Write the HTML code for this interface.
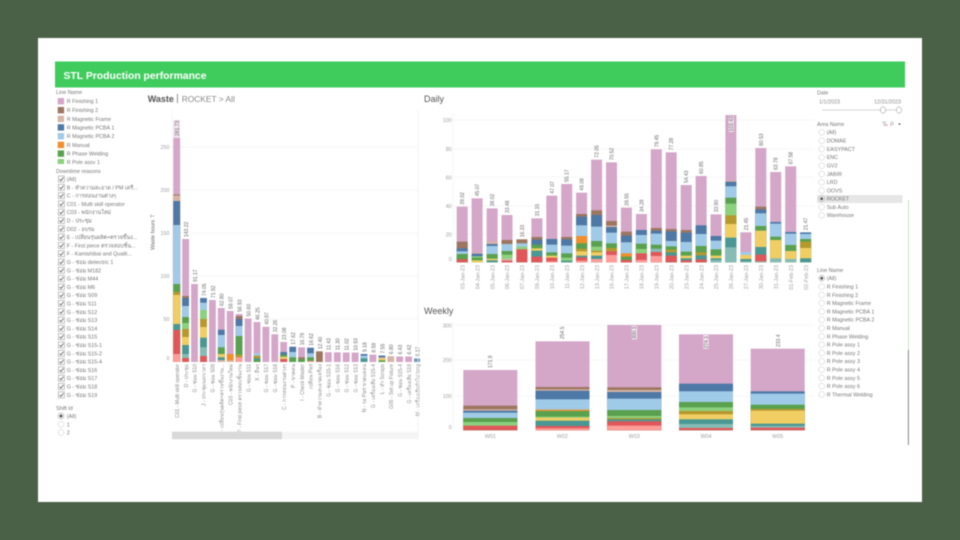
<!DOCTYPE html>
<html><head><meta charset="utf-8"><title>STL Production performance</title>
<style>
html,body{margin:0;padding:0;background:#4b6147;width:960px;height:540px;overflow:hidden}
svg{display:block;filter:blur(.4px)}
text{font-family:"Liberation Sans","Noto Sans CJK SC",sans-serif;fill:#777;font-size:5.4px}
.p{fill:#d4a6c8}.b{fill:#9d7660}.e{fill:#d7b5a6}.u{fill:#4e79a7}.l{fill:#a0cbe8}.o{fill:#f28e2b}.g{fill:#59a14f}.n{fill:#8cd17d}.v{fill:#b6992d}.y{fill:#f1ce63}.t{fill:#499894}.s{fill:#86bcb6}.r{fill:#e15759}.m{fill:#ff9d9a}.k{fill:#eed9e8}
.w rect{width:6.8px;height:170px}
.d rect{width:11px;height:300px}
.z rect{width:54px;height:250px}
.v5 text{font-size:5px;fill:#666}
.ax text{font-size:5.4px;fill:#a0a0a0;text-anchor:end}
.dt text{font-size:5.4px;fill:#a0a0a0;text-anchor:end}
.gl line{stroke:#f3f3f3;stroke-width:.7}
.ct text{font-size:5px;fill:#888;text-anchor:end}
</style></head><body>
<svg width="960" height="540" viewBox="0 0 960 540" xmlns="http://www.w3.org/2000/svg">
<defs>
<clipPath id="cw"><rect x="170" y="100" width="250" height="262"/></clipPath>
<clipPath id="cd"><rect x="450" y="115" width="370" height="147.4"/></clipPath>
<clipPath id="cz"><rect x="450" y="325" width="370" height="105.2"/></clipPath>
<clipPath id="cl"><rect x="50" y="90" width="90" height="74"/></clipPath>
<symbol id="c" viewBox="0 0 7 7" overflow="visible"><rect x=".4" y=".4" width="6" height="6" fill="#fff" stroke="#999" stroke-width=".6"/><path d="M1.6 3.6 L3 5 L5.4 1.8" fill="none" stroke="#555" stroke-width=".8"/></symbol>
<symbol id="o" viewBox="0 0 7 7" overflow="visible"><circle cx="3.5" cy="3.5" r="2.9" fill="#fff" stroke="#c4c4c4" stroke-width=".5"/></symbol>
<symbol id="q" viewBox="0 0 7 7" overflow="visible"><circle cx="3.5" cy="3.5" r="2.9" fill="#fff" stroke="#888" stroke-width=".5"/><circle cx="3.5" cy="3.5" r="1.5" fill="#555"/></symbol>
</defs>
<rect x="38" y="38" width="884" height="464" fill="#fff"/>
<rect x="55" y="61.5" width="850" height="26" fill="#3fcc5d"/>
<text x="63.5" y="79" textLength="143" lengthAdjust="spacingAndGlyphs" style="font-size:10.5px;font-weight:700;fill:#fff">STL Production performance</text>

<!-- right edge line -->
<rect x="908" y="200" width=".8" height="150" fill="#bcd9bb"/>
<rect x="908" y="350" width=".8" height="95" fill="#6b6b6b"/>

<!-- left legend -->
<text x="56" y="94">Line Name</text>
<g clip-path="url(#cl)">
<rect class="p" x="57.7" y="98" width="6.4" height="6.4"/><text x="66.7" y="103.2">R Finishing 1</text>
<rect class="b" x="57.7" y="107" width="6.4" height="6.4"/><text x="66.7" y="112">R Finishing 2</text>
<rect class="e" x="57.7" y="115.7" width="6.4" height="6.4"/><text x="66.7" y="120.8">R Magnetic Frame</text>
<rect class="u" x="57.7" y="124.2" width="6.4" height="6.4"/><text x="66.7" y="129.3">R Magnetic PCBA 1</text>
<rect class="l" x="57.7" y="133" width="6.4" height="6.4"/><text x="66.7" y="138.1">R Magnetic PCBA 2</text>
<rect class="o" x="57.7" y="141.7" width="6.4" height="6.4"/><text x="66.7" y="146.8">R Manual</text>
<rect class="g" x="57.7" y="150.4" width="6.4" height="6.4"/><text x="66.7" y="155.5">R Phase Welding</text>
<rect class="n" x="57.7" y="159" width="6.4" height="6.4"/><text x="66.7" y="164.1">R Pole assy 1</text>
</g>
<text x="56" y="173">Downtime reasons</text>
<g>
<use href="#c" x="58" y="175.6" width="7" height="7"/><text x="66.7" y="181">(All)</text>
<use href="#c" x="58" y="183.9" width="7" height="7"/><text x="66.7" y="189.3">B - ทำความสะอาด / PM เครื่...</text>
<use href="#c" x="58" y="192.2" width="7" height="7"/><text x="66.7" y="197.6">C - การสอนงานต่างๆ</text>
<use href="#c" x="58" y="200.5" width="7" height="7"/><text x="66.7" y="205.9">C01 - Multi skill operator</text>
<use href="#c" x="58" y="208.8" width="7" height="7"/><text x="66.7" y="214.2">C03 - พนักงานใหม่</text>
<use href="#c" x="58" y="217.1" width="7" height="7"/><text x="66.7" y="222.5">D - ประชุม</text>
<use href="#c" x="58" y="225.4" width="7" height="7"/><text x="66.7" y="230.8">D02 - อบรม</text>
<use href="#c" x="58" y="233.7" width="7" height="7"/><text x="66.7" y="239.1">E - เปลี่ยนรุ่นผลิต+ตรวจขึ้นง...</text>
<use href="#c" x="58" y="242" width="7" height="7"/><text x="66.7" y="247.4">F - First piece ตรวจสอบชิ้น...</text>
<use href="#c" x="58" y="250.3" width="7" height="7"/><text x="66.7" y="255.7">F - Kamishibai and Qualit...</text>
<use href="#c" x="58" y="258.6" width="7" height="7"/><text x="66.7" y="264">G - ซ่อม dielectric 1</text>
<use href="#c" x="58" y="266.9" width="7" height="7"/><text x="66.7" y="272.3">G - ซ่อม M182</text>
<use href="#c" x="58" y="275.2" width="7" height="7"/><text x="66.7" y="280.6">G - ซ่อม M44</text>
<use href="#c" x="58" y="283.5" width="7" height="7"/><text x="66.7" y="288.9">G - ซ่อม M6</text>
<use href="#c" x="58" y="291.8" width="7" height="7"/><text x="66.7" y="297.2">G - ซ่อม S09</text>
<use href="#c" x="58" y="300.1" width="7" height="7"/><text x="66.7" y="305.5">G - ซ่อม S11</text>
<use href="#c" x="58" y="308.4" width="7" height="7"/><text x="66.7" y="313.8">G - ซ่อม S12</text>
<use href="#c" x="58" y="316.7" width="7" height="7"/><text x="66.7" y="322.1">G - ซ่อม S13</text>
<use href="#c" x="58" y="325" width="7" height="7"/><text x="66.7" y="330.4">G - ซ่อม S14</text>
<use href="#c" x="58" y="333.3" width="7" height="7"/><text x="66.7" y="338.7">G - ซ่อม S15</text>
<use href="#c" x="58" y="341.6" width="7" height="7"/><text x="66.7" y="347">G - ซ่อม S15-1</text>
<use href="#c" x="58" y="349.9" width="7" height="7"/><text x="66.7" y="355.3">G - ซ่อม S15-2</text>
<use href="#c" x="58" y="358.2" width="7" height="7"/><text x="66.7" y="363.6">G - ซ่อม S15-4</text>
<use href="#c" x="58" y="366.5" width="7" height="7"/><text x="66.7" y="371.9">G - ซ่อม S16</text>
<use href="#c" x="58" y="374.8" width="7" height="7"/><text x="66.7" y="380.2">G - ซ่อม S17</text>
<use href="#c" x="58" y="383.1" width="7" height="7"/><text x="66.7" y="388.5">G - ซ่อม S18</text>
<use href="#c" x="58" y="391.4" width="7" height="7"/><text x="66.7" y="396.8">G - ซ่อม S19</text>
</g>
<text x="56" y="409.8">Shift Id</text>
<use href="#q" x="57.5" y="412.5" width="7" height="7"/><text x="66.7" y="418">(All)</text>
<use href="#o" x="57.5" y="420.8" width="7" height="7"/><text x="66.7" y="426.3">1</text>
<use href="#o" x="57.5" y="429.1" width="7" height="7"/><text x="66.7" y="434.6">2</text>

<!-- titles -->
<text x="147.7" y="102" style="font-size:9px;font-weight:700;fill:#555">Waste</text>
<rect x="177" y="94" width=".8" height="9" fill="#777"/>
<text x="181.7" y="102" style="font-size:8.4px;fill:#888">ROCKET &gt; All</text>
<text x="424" y="102" style="font-size:9px;fill:#555">Daily</text>
<text x="424" y="314" style="font-size:9px;fill:#555">Weekly</text>

<!-- Waste chart -->
<g class="gl"><line x1="172" x2="418" y1="147" y2="147"/><line x1="172" x2="418" y1="190" y2="190"/><line x1="172" x2="418" y1="233" y2="233"/><line x1="172" x2="418" y1="276" y2="276"/><line x1="172" x2="418" y1="319" y2="319"/><line x1="172" x2="172" y1="110" y2="362"/></g>
<g class="ax"><text x="169.5" y="149">250</text><text x="169.5" y="192">200</text><text x="169.5" y="235">150</text><text x="169.5" y="278">100</text><text x="169.5" y="321">50</text><text x="169.5" y="360">0</text></g>
<text transform="translate(154.5 250) rotate(-90)" style="font-size:5.4px;fill:#666">Waste hours ⊤</text>
<g class="w" clip-path="url(#cw)">
<g transform="translate(173.3 0)"><rect class="k" y="120"/><rect class="p" y="138"/><rect class="b" y="194.5"/><rect class="e" y="195.5"/><rect class="u" y="201"/><rect class="l" y="225"/><rect class="g" y="284"/><rect class="v" y="292"/><rect class="y" y="295"/><rect class="t" y="324"/><rect class="r" y="330"/><rect class="m" y="354"/></g>
<g transform="translate(182.2 0)"><rect class="p" y="239"/><rect class="b" y="296"/><rect class="u" y="298"/><rect class="l" y="306"/><rect class="g" y="317"/><rect class="n" y="323"/><rect class="v" y="329"/><rect class="y" y="337"/><rect class="t" y="345"/><rect class="s" y="354"/><rect class="r" y="358"/></g>
<g transform="translate(191.1 0)"><rect class="p" y="284"/></g>
<g transform="translate(200.1 0)"><rect class="u" y="298"/><rect class="l" y="302.7"/><rect class="n" y="310"/><rect class="v" y="319"/><rect class="y" y="327"/><rect class="t" y="337.7"/><rect class="s" y="347.3"/><rect class="r" y="356"/></g>
<g transform="translate(209 0)"><rect class="p" y="300"/></g>
<g transform="translate(217.9 0)"><rect class="p" y="308"/><rect class="u" y="329.7"/><rect class="l" y="335"/><rect class="g" y="347.3"/><rect class="y" y="354"/><rect class="t" y="357.3"/><rect class="e" y="360"/></g>
<g transform="translate(226.8 0)"><rect class="p" y="311"/><rect class="o" y="354"/><rect class="e" y="360.3"/></g>
<g transform="translate(235.7 0)"><rect class="p" y="314"/><rect class="b" y="316"/><rect class="u" y="319"/><rect class="l" y="326"/><rect class="g" y="336"/><rect class="v" y="354.7"/><rect class="m" y="357.3"/></g>
<g transform="translate(244.7 0)"><rect class="p" y="318.5"/></g>
<g transform="translate(253.6 0)"><rect class="p" y="322"/><rect class="l" y="353.3"/><rect class="v" y="355.7"/><rect class="t" y="358.3"/><rect class="g" y="360"/></g>
<g transform="translate(262.5 0)"><rect class="p" y="326.8"/></g>
<g transform="translate(271.4 0)"><rect class="p" y="334.3"/></g>
<g transform="translate(280.3 0)"><rect class="p" y="342"/><rect class="u" y="352"/><rect class="g" y="354.7"/><rect class="y" y="356.7"/><rect class="r" y="359"/></g>
<g transform="translate(289.3 0)"><rect class="u" y="346.7"/><rect class="l" y="352"/><rect class="g" y="357.3"/></g>
<g transform="translate(298.2 0)"><rect class="p" y="347.3"/><rect class="b" y="357.3"/><rect class="g" y="359"/></g>
<g transform="translate(307.1 0)"><rect class="u" y="347.7"/><rect class="l" y="353.3"/><rect class="g" y="357.3"/><rect class="m" y="361"/></g>
<g transform="translate(316 0)"><rect class="b" y="351.3"/></g>
<g transform="translate(324.9 0)"><rect class="p" y="352.2"/></g>
<g transform="translate(333.9 0)"><rect class="p" y="352.3"/></g>
<g transform="translate(342.8 0)"><rect class="p" y="352.5"/></g>
<g transform="translate(351.7 0)"><rect class="p" y="352.6"/></g>
<g transform="translate(360.6 0)"><rect class="u" y="354"/><rect class="l" y="355.7"/><rect class="t" y="358.3"/></g>
<g transform="translate(369.5 0)"><rect class="p" y="354.6"/></g>
<g transform="translate(378.5 0)"><rect class="u" y="355.5"/><rect class="e" y="357.3"/><rect class="y" y="358.5"/><rect class="g" y="360.3"/></g>
<g transform="translate(387.4 0)"><rect class="e" y="356.2"/></g>
<g transform="translate(396.3 0)"><rect class="p" y="356.5"/></g>
<g transform="translate(405.2 0)"><rect class="p" y="356.5"/></g>
<g transform="translate(414.1 0)" style="opacity:.8"><rect class="u" y="358.4"/></g>
</g>
<g class="v5">
<rect x="175" y="121" width="5" height="16" fill="#f3e6ef"/>
<text transform="translate(179 136) rotate(-90)">281.73</text>
<text transform="translate(188 237) rotate(-90)">143.22</text>
<text transform="translate(197 282) rotate(-90)">91.17</text>
<text transform="translate(206 296) rotate(-90)">74.05</text>
<text transform="translate(214.8 298) rotate(-90)">71.92</text>
<text transform="translate(223.7 306) rotate(-90)">62.80</text>
<text transform="translate(232.6 309) rotate(-90)">59.07</text>
<text transform="translate(241.5 312) rotate(-90)">56.93</text>
<text transform="translate(250.5 316.5) rotate(-90)">50.60</text>
<text transform="translate(259.4 320) rotate(-90)">46.25</text>
<text transform="translate(268.3 324.8) rotate(-90)">40.97</text>
<text transform="translate(277.2 332.3) rotate(-90)">32.26</text>
<text transform="translate(286.1 340) rotate(-90)">23.08</text>
<text transform="translate(295.1 344.7) rotate(-90)">17.62</text>
<text transform="translate(304 345.3) rotate(-90)">16.79</text>
<text transform="translate(312.9 345.7) rotate(-90)">16.62</text>
<text transform="translate(321.8 349.3) rotate(-90)">12.40</text>
<text transform="translate(330.7 350.2) rotate(-90)">11.43</text>
<text transform="translate(339.7 350.3) rotate(-90)">11.30</text>
<text transform="translate(348.6 350.5) rotate(-90)">11.02</text>
<text transform="translate(357.5 350.6) rotate(-90)">10.93</text>
<text transform="translate(366.4 352) rotate(-90)">9.18</text>
<text transform="translate(375.3 352.6) rotate(-90)">8.59</text>
<text transform="translate(384.3 353.5) rotate(-90)">7.55</text>
<text transform="translate(393.2 354.2) rotate(-90)">6.80</text>
<text transform="translate(402.1 354.5) rotate(-90)">6.43</text>
<text transform="translate(411 354.5) rotate(-90)">6.42</text>
<text transform="translate(419.5 356.4) rotate(-90)">6.17</text>
</g>
<g class="ct">
<text transform="translate(178.9 364) rotate(-90)">C01 - Multi skill operator</text>
<text transform="translate(187.8 364) rotate(-90)">D - ประชุม</text>
<text transform="translate(196.7 364) rotate(-90)">G - ซ่อม S10</text>
<text transform="translate(205.7 364) rotate(-90)">J - ประชุมนอกเวลา</text>
<text transform="translate(214.6 364) rotate(-90)">G - ซ่อม S09</text>
<text transform="translate(223.5 364) rotate(-90)">E - เปลี่ยนรุ่นผลิต+ตรวจขึ้นงาน...</text>
<text transform="translate(232.4 364) rotate(-90)">C03 - พนักงานใหม่</text>
<text transform="translate(241.3 364) rotate(-90)">F - First piece ตรวจสอบชิ้นงาน</text>
<text transform="translate(250.3 364) rotate(-90)">G - ซ่อม S11</text>
<text transform="translate(259.2 364) rotate(-90)">X - อื่นๆ</text>
<text transform="translate(268.1 364) rotate(-90)">G - ซ่อม S17</text>
<text transform="translate(277 364) rotate(-90)">G - ซ่อม S18</text>
<text transform="translate(285.9 364) rotate(-90)">C - การสอนงานต่างๆ</text>
<text transform="translate(294.9 364) rotate(-90)">P - ขาดคน</text>
<text transform="translate(303.8 364) rotate(-90)">I - Check Master</text>
<text transform="translate(312.7 364) rotate(-90)">เปลี่ยน Part</text>
<text transform="translate(321.6 364) rotate(-90)">B - ทำความสะอาดเครื่อง</text>
<text transform="translate(330.5 364) rotate(-90)">G - ซ่อม S15-1</text>
<text transform="translate(339.5 364) rotate(-90)">G - ซ่อม S16</text>
<text transform="translate(348.4 364) rotate(-90)">G - ซ่อม S12</text>
<text transform="translate(357.3 364) rotate(-90)">G - ซ่อม S13</text>
<text transform="translate(366.2 364) rotate(-90)">N - รอ Part ขาดแคลน</text>
<text transform="translate(375.1 364) rotate(-90)">G - เครื่องเสีย S15-4</text>
<text transform="translate(384.1 364) rotate(-90)">L - ทำ Scraps</text>
<text transform="translate(393 364) rotate(-90)">G05 - Set up Fixture</text>
<text transform="translate(401.9 364) rotate(-90)">G - ซ่อม S15-4</text>
<text transform="translate(410.8 364) rotate(-90)">G - เครื่องเสีย S19</text>
<text transform="translate(419.5 364) rotate(-90)">M - เครื่องเสียทั่วไป long</text>
</g>
<rect x="172" y="431.7" width="246" height="7.5" fill="#f5f5f5"/>
<rect x="172" y="431.7" width="110" height="7.5" fill="#d9d9d9"/>
<rect x="417.6" y="110" width=".8" height="330" fill="#f0f0f0"/>

<!-- Daily chart -->
<g class="gl"><line x1="453" x2="815" y1="120" y2="120"/><line x1="453" x2="815" y1="149" y2="149"/><line x1="453" x2="815" y1="177" y2="177"/><line x1="453" x2="815" y1="206" y2="206"/><line x1="453" x2="815" y1="234" y2="234"/><line x1="453" x2="453" y1="112" y2="262"/></g>
<g class="ax"><text x="451.7" y="122">100</text><text x="451.7" y="151">80</text><text x="451.7" y="179.5">60</text><text x="451.7" y="208">40</text><text x="451.7" y="236.5">20</text><text x="451.7" y="261">0</text></g>
<g class="d" clip-path="url(#cd)">
<g transform="translate(456.7 90) scale(1 .3333)"><rect class="p" y="350"/><rect class="b" y="455"/><rect class="u" y="475"/><rect class="l" y="484"/><rect class="g" y="492"/><rect class="r" y="508"/></g>
<g transform="translate(471.6 90) scale(1 .3333)"><rect class="p" y="325"/><rect class="e" y="488"/><rect class="u" y="491"/><rect class="n" y="499"/><rect class="g" y="503"/><rect class="y" y="511"/></g>
<g transform="translate(486.6 90) scale(1 .3333)"><rect class="p" y="355"/><rect class="e" y="455"/><rect class="u" y="462"/><rect class="l" y="468"/><rect class="g" y="492"/><rect class="y" y="506"/><rect class="t" y="511"/></g>
<g transform="translate(501.5 90) scale(1 .3333)"><rect class="p" y="375"/><rect class="b" y="450"/><rect class="l" y="462"/><rect class="g" y="483"/><rect class="n" y="494"/><rect class="e" y="506"/><rect class="r" y="512"/></g>
<g transform="translate(516.4 90) scale(1 .3333)"><rect class="b" y="448"/><rect class="l" y="460"/><rect class="n" y="470"/><rect class="r" y="478"/></g>
<g transform="translate(531.4 90) scale(1 .3333)"><rect class="p" y="385"/><rect class="b" y="441"/><rect class="u" y="449"/><rect class="g" y="464"/><rect class="y" y="475"/><rect class="t" y="482"/><rect class="r" y="500"/></g>
<g transform="translate(546.3 90) scale(1 .3333)"><rect class="p" y="317"/><rect class="u" y="447"/><rect class="l" y="464"/><rect class="g" y="487"/><rect class="y" y="497"/><rect class="r" y="503"/><rect class="m" y="514"/></g>
<g transform="translate(561.2 90) scale(1 .3333)"><rect class="p" y="282"/><rect class="b" y="441"/><rect class="u" y="448"/><rect class="l" y="467"/><rect class="g" y="490"/><rect class="n" y="503"/><rect class="t" y="512"/></g>
<g transform="translate(576.1 90) scale(1 .3333)"><rect class="p" y="308"/><rect class="b" y="372"/><rect class="u" y="380"/><rect class="l" y="406"/><rect class="o" y="438"/><rect class="g" y="460"/><rect class="v" y="476"/><rect class="y" y="484"/><rect class="t" y="497"/><rect class="r" y="502"/><rect class="m" y="512"/></g>
<g transform="translate(591.1 90) scale(1 .3333)"><rect class="p" y="209"/><rect class="b" y="361"/><rect class="u" y="375"/><rect class="l" y="410"/><rect class="g" y="453"/><rect class="n" y="470"/><rect class="v" y="482"/><rect class="y" y="487"/><rect class="t" y="497"/><rect class="m" y="507"/></g>
<g transform="translate(606 90) scale(1 .3333)"><rect class="p" y="217"/><rect class="b" y="393"/><rect class="e" y="407"/><rect class="u" y="411"/><rect class="l" y="428"/><rect class="g" y="460"/><rect class="v" y="474"/><rect class="r" y="484"/><rect class="m" y="495"/></g>
<g transform="translate(620.9 90) scale(1 .3333)"><rect class="p" y="353"/><rect class="b" y="425"/><rect class="u" y="437"/><rect class="l" y="457"/><rect class="o" y="490"/><rect class="g" y="500"/><rect class="r" y="510"/></g>
<g transform="translate(635.9 90) scale(1 .3333)"><rect class="p" y="372"/><rect class="u" y="420"/><rect class="l" y="435"/><rect class="g" y="461"/><rect class="n" y="477"/><rect class="r" y="490"/><rect class="m" y="510"/></g>
<g transform="translate(650.8 90) scale(1 .3333)"><rect class="p" y="178"/><rect class="b" y="414"/><rect class="u" y="422"/><rect class="l" y="431"/><rect class="g" y="464"/><rect class="s" y="476"/><rect class="r" y="486"/><rect class="m" y="498"/></g>
<g transform="translate(665.7 90) scale(1 .3333)"><rect class="p" y="187"/><rect class="b" y="417"/><rect class="u" y="424"/><rect class="l" y="453"/><rect class="g" y="469"/><rect class="v" y="479"/><rect class="t" y="487"/><rect class="r" y="497"/></g>
<g transform="translate(680.7 90) scale(1 .3333)"><rect class="p" y="285"/><rect class="b" y="420"/><rect class="u" y="428"/><rect class="l" y="456"/><rect class="g" y="485"/><rect class="y" y="497"/><rect class="t" y="505"/><rect class="r" y="511"/></g>
<g transform="translate(695.6 90) scale(1 .3333)"><rect class="p" y="258"/><rect class="u" y="406"/><rect class="l" y="432"/><rect class="g" y="468"/><rect class="v" y="487"/><rect class="t" y="496"/><rect class="r" y="508"/></g>
<g transform="translate(710.5 90) scale(1 .3333)"><rect class="p" y="373"/><rect class="u" y="438"/><rect class="l" y="452"/><rect class="g" y="478"/><rect class="y" y="497"/><rect class="t" y="505"/><rect class="s" y="510"/></g>
<g transform="translate(725.4 90) scale(1 .3333)"><rect class="p" y="60"/><rect class="e" y="272"/><rect class="u" y="275"/><rect class="l" y="289"/><rect class="g" y="323"/><rect class="n" y="341"/><rect class="v" y="376"/><rect class="y" y="402"/><rect class="t" y="443"/><rect class="s" y="472"/></g>
<g transform="translate(740.4 90) scale(1 .3333)"><rect class="p" y="427"/><rect class="l" y="486"/><rect class="y" y="495"/><rect class="t" y="507"/><rect class="s" y="514"/></g>
<g transform="translate(755.3 90) scale(1 .3333)"><rect class="p" y="174"/><rect class="b" y="350"/><rect class="u" y="358"/><rect class="l" y="370"/><rect class="g" y="408"/><rect class="y" y="422"/><rect class="t" y="471"/><rect class="r" y="494"/><rect class="s" y="514"/></g>
<g transform="translate(770.2 90) scale(1 .3333)"><rect class="p" y="246"/><rect class="u" y="396"/><rect class="l" y="401"/><rect class="g" y="440"/><rect class="y" y="450"/><rect class="s" y="505"/></g>
<g transform="translate(785.2 90) scale(1 .3333)"><rect class="p" y="229"/><rect class="u" y="426"/><rect class="l" y="431"/><rect class="g" y="465"/><rect class="y" y="483"/><rect class="s" y="507"/></g>
<g transform="translate(800.1 90) scale(1 .3333)"><rect class="u" y="427"/><rect class="l" y="432"/><rect class="g" y="447"/><rect class="v" y="455"/><rect class="y" y="474"/><rect class="t" y="505"/></g>
</g>
<g class="v5">
<text transform="translate(464.2 204.7) rotate(-90)">39.02</text>
<text transform="translate(479.1 196.3) rotate(-90)">45.07</text>
<text transform="translate(494.1 206.3) rotate(-90)">38.02</text>
<text transform="translate(509 213) rotate(-90)">33.48</text>
<text transform="translate(523.9 237.3) rotate(-90)">16.33</text>
<text transform="translate(538.9 216.3) rotate(-90)">31.15</text>
<text transform="translate(553.8 193.7) rotate(-90)">47.07</text>
<text transform="translate(568.7 182) rotate(-90)">55.17</text>
<text transform="translate(583.6 190.7) rotate(-90)">49.08</text>
<text transform="translate(598.6 157.7) rotate(-90)">72.05</text>
<text transform="translate(613.5 160.3) rotate(-90)">70.52</text>
<text transform="translate(628.4 205.7) rotate(-90)">39.55</text>
<text transform="translate(643.4 212) rotate(-90)">34.28</text>
<text transform="translate(658.3 147.3) rotate(-90)">79.45</text>
<text transform="translate(673.2 150.3) rotate(-90)">77.28</text>
<text transform="translate(688.2 183) rotate(-90)">54.43</text>
<text transform="translate(703.1 174) rotate(-90)">60.85</text>
<text transform="translate(718 212.3) rotate(-90)">33.90</text>
<rect x="728.6" y="116" width="5.2" height="16" fill="#f3e6ef"/>
<text transform="translate(733 131.5) rotate(-90)">103.43</text>
<text transform="translate(747.9 230.3) rotate(-90)">21.45</text>
<text transform="translate(762.8 146) rotate(-90)">80.53</text>
<text transform="translate(777.7 170) rotate(-90)">63.78</text>
<text transform="translate(792.7 164.3) rotate(-90)">67.58</text>
<text transform="translate(807.6 230.3) rotate(-90)">21.47</text>
</g>
<g class="dt">
<text transform="translate(464.4 265) rotate(-90)">03-Jan-23</text>
<text transform="translate(479.3 265) rotate(-90)">04-Jan-23</text>
<text transform="translate(494.3 265) rotate(-90)">05-Jan-23</text>
<text transform="translate(509.2 265) rotate(-90)">06-Jan-23</text>
<text transform="translate(524.1 265) rotate(-90)">07-Jan-23</text>
<text transform="translate(539.1 265) rotate(-90)">09-Jan-23</text>
<text transform="translate(554 265) rotate(-90)">10-Jan-23</text>
<text transform="translate(568.9 265) rotate(-90)">11-Jan-23</text>
<text transform="translate(583.8 265) rotate(-90)">12-Jan-23</text>
<text transform="translate(598.8 265) rotate(-90)">13-Jan-23</text>
<text transform="translate(613.7 265) rotate(-90)">16-Jan-23</text>
<text transform="translate(628.6 265) rotate(-90)">17-Jan-23</text>
<text transform="translate(643.6 265) rotate(-90)">18-Jan-23</text>
<text transform="translate(658.5 265) rotate(-90)">19-Jan-23</text>
<text transform="translate(673.4 265) rotate(-90)">20-Jan-23</text>
<text transform="translate(688.4 265) rotate(-90)">23-Jan-23</text>
<text transform="translate(703.3 265) rotate(-90)">24-Jan-23</text>
<text transform="translate(718.2 265) rotate(-90)">25-Jan-23</text>
<text transform="translate(733.1 265) rotate(-90)">26-Jan-23</text>
<text transform="translate(748.1 265) rotate(-90)">27-Jan-23</text>
<text transform="translate(763 265) rotate(-90)">30-Jan-23</text>
<text transform="translate(777.9 265) rotate(-90)">31-Jan-23</text>
<text transform="translate(792.9 265) rotate(-90)">01-Feb-23</text>
<text transform="translate(807.8 265) rotate(-90)">02-Feb-23</text>
</g>

<!-- Weekly chart -->
<g class="gl"><line x1="453" x2="815" y1="325" y2="325"/><line x1="453" x2="815" y1="360" y2="360"/><line x1="453" x2="815" y1="396" y2="396"/><line x1="453" x2="453" y1="322" y2="430"/></g>
<g class="ax"><text x="451.7" y="327.5">300</text><text x="451.7" y="362">200</text><text x="451.7" y="398">100</text><text x="451.7" y="429">0</text></g>
<g class="z" clip-path="url(#cz)">
<g transform="translate(463.3 300) scale(1 .3333)"><rect class="p" y="210"/><rect class="b" y="317"/><rect class="e" y="328"/><rect class="u" y="332"/><rect class="l" y="338"/><rect class="g" y="354"/><rect class="n" y="366"/><rect class="r" y="377"/></g>
<g transform="translate(535.5 300) scale(1 .3333)"><rect class="p" y="124"/><rect class="b" y="261"/><rect class="e" y="268"/><rect class="u" y="272"/><rect class="l" y="298"/><rect class="o" y="329"/><rect class="g" y="333"/><rect class="n" y="350"/><rect class="y" y="353"/><rect class="t" y="362"/><rect class="r" y="378"/><rect class="m" y="385"/></g>
<g transform="translate(607.3 300) scale(1 .3333)"><rect class="p" y="60"/><rect class="b" y="262"/><rect class="e" y="270"/><rect class="u" y="276"/><rect class="l" y="296"/><rect class="g" y="330"/><rect class="n" y="348"/><rect class="v" y="354"/><rect class="t" y="358"/><rect class="r" y="364"/><rect class="m" y="377"/></g>
<g transform="translate(679 300) scale(1 .3333)"><rect class="p" y="103"/><rect class="u" y="251"/><rect class="l" y="274"/><rect class="g" y="306"/><rect class="n" y="322"/><rect class="v" y="333"/><rect class="y" y="343"/><rect class="t" y="358"/><rect class="s" y="372"/><rect class="r" y="384"/></g>
<g transform="translate(750.7 300) scale(1 .3333)"><rect class="p" y="146"/><rect class="u" y="274"/><rect class="l" y="281"/><rect class="g" y="314"/><rect class="v" y="327"/><rect class="y" y="332"/><rect class="t" y="371"/><rect class="s" y="378"/><rect class="r" y="383"/></g>
</g>
<g class="v5">
<text transform="translate(492 368) rotate(-90)">171.9</text>
<text transform="translate(564.2 339) rotate(-90)">254.5</text>
<rect x="631.7" y="326" width="5.4" height="13.5" fill="#f3e6ef"/>
<text transform="translate(636 339) rotate(-90)">300.1</text>
<rect x="703.3" y="335" width="5.4" height="14" fill="#f3e6ef"/>
<text transform="translate(707.8 348.5) rotate(-90)">274.1</text>
<text transform="translate(779.8 347) rotate(-90)">233.4</text>
</g>
<g class="dt" style="text-anchor:middle">
<text x="490.3" y="438" style="text-anchor:middle">W01</text><text x="562.3" y="438" style="text-anchor:middle">W02</text><text x="634.2" y="438" style="text-anchor:middle">W03</text><text x="706" y="438" style="text-anchor:middle">W04</text><text x="777.7" y="438" style="text-anchor:middle">W05</text>
</g>

<!-- Right filters -->
<text x="817" y="94.5">Date</text>
<text x="819" y="103.5" style="fill:#888">1/1/2023</text>
<text x="901" y="103.5" style="text-anchor:end;fill:#888">12/31/2023</text>
<rect x="822" y="109.5" width="78" height="1" fill="#d4d4d4"/>
<ellipse cx="883" cy="110" rx="2.6" ry="3.2" fill="#fff" stroke="#888" stroke-width=".5"/>
<ellipse cx="899" cy="110" rx="2.6" ry="3.2" fill="#fff" stroke="#888" stroke-width=".5"/>
<text x="817" y="126">Area Name</text>
<path d="M882.5 122 h3.5 l-1.4 1.8 v2 l-.8 -.5 v-1.5z" fill="none" stroke="#999" stroke-width=".5"/>
<path d="M885.5 124 l2 2 M887.5 124 l-2 2" stroke="#d66" stroke-width=".5"/>
<circle cx="892" cy="123.5" r="1.4" fill="none" stroke="#888" stroke-width=".5"/><path d="M891 124.8 l-1 1.2" stroke="#888" stroke-width=".5"/>
<path d="M898 123.5 h3 l-1.5 1.6z" fill="#555"/>
<rect x="817" y="195" width="85.5" height="8" fill="#e6e6e6"/>
<use href="#o" x="818.2" y="128.8" width="7" height="7"/><text x="826.7" y="134.2">(All)</text>
<use href="#o" x="818.2" y="137.2" width="7" height="7"/><text x="826.7" y="142.6">DOMAE</text>
<use href="#o" x="818.2" y="145.5" width="7" height="7"/><text x="826.7" y="150.9">EASYPACT</text>
<use href="#o" x="818.2" y="153.8" width="7" height="7"/><text x="826.7" y="159.2">ENC</text>
<use href="#o" x="818.2" y="162.2" width="7" height="7"/><text x="826.7" y="167.6">GV2</text>
<use href="#o" x="818.2" y="170.5" width="7" height="7"/><text x="826.7" y="175.9">JABIR</text>
<use href="#o" x="818.2" y="178.8" width="7" height="7"/><text x="826.7" y="184.2">LRD</text>
<use href="#o" x="818.2" y="187.2" width="7" height="7"/><text x="826.7" y="192.6">OOVS</text>
<use href="#q" x="818.2" y="195.2" width="7" height="7"/><text x="826.7" y="200.6">ROCKET</text>
<use href="#o" x="818.2" y="203.5" width="7" height="7"/><text x="826.7" y="208.9">Sub Auto</text>
<use href="#o" x="818.2" y="211.8" width="7" height="7"/><text x="826.7" y="217.2">Warehouse</text>

<text x="817" y="272">Line Name</text>
<use href="#q" x="818.2" y="274.8" width="7" height="7"/><text x="826.7" y="280.2">(All)</text>
<use href="#o" x="818.2" y="283.1" width="7" height="7"/><text x="826.7" y="288.5">R Finishing 1</text>
<use href="#o" x="818.2" y="291.4" width="7" height="7"/><text x="826.7" y="296.8">R Finishing 2</text>
<use href="#o" x="818.2" y="299.7" width="7" height="7"/><text x="826.7" y="305.1">R Magnetic Frame</text>
<use href="#o" x="818.2" y="308" width="7" height="7"/><text x="826.7" y="313.4">R Magnetic PCBA 1</text>
<use href="#o" x="818.2" y="316.3" width="7" height="7"/><text x="826.7" y="321.7">R Magnetic PCBA 2</text>
<use href="#o" x="818.2" y="324.6" width="7" height="7"/><text x="826.7" y="330">R Manual</text>
<use href="#o" x="818.2" y="332.9" width="7" height="7"/><text x="826.7" y="338.3">R Phase Welding</text>
<use href="#o" x="818.2" y="341.2" width="7" height="7"/><text x="826.7" y="346.6">R Pole assy 1</text>
<use href="#o" x="818.2" y="349.5" width="7" height="7"/><text x="826.7" y="354.9">R Pole assy 2</text>
<use href="#o" x="818.2" y="357.8" width="7" height="7"/><text x="826.7" y="363.2">R Pole assy 3</text>
<use href="#o" x="818.2" y="366.1" width="7" height="7"/><text x="826.7" y="371.5">R Pole assy 4</text>
<use href="#o" x="818.2" y="374.4" width="7" height="7"/><text x="826.7" y="379.8">R Pole assy 5</text>
<use href="#o" x="818.2" y="382.7" width="7" height="7"/><text x="826.7" y="388.1">R Pole assy 6</text>
<use href="#o" x="818.2" y="391" width="7" height="7"/><text x="826.7" y="396.4">R Thermal Welding</text>
</svg>
</body></html>
